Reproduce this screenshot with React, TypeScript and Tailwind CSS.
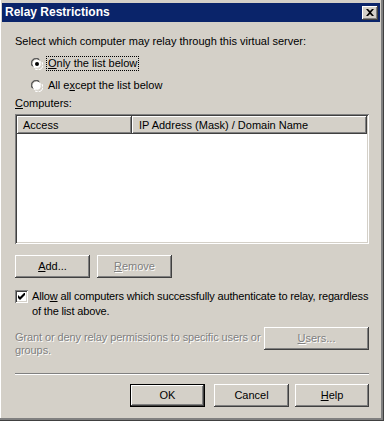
import React from 'react';

const raised = 'shadow-[inset_-1px_-1px_#404040,inset_1px_1px_#ffffff,inset_-2px_-2px_#808080,inset_2px_2px_#d4d0c8]';
const sunken = 'shadow-[inset_1px_1px_#808080,inset_-1px_-1px_#ffffff,inset_2px_2px_#404040,inset_-2px_-2px_#d4d0c8]';

const Btn: React.FC<{ children: React.ReactNode; w: string; disabled?: boolean; isDefault?: boolean }> = ({ children, w, disabled, isDefault }) => (
    <div className={`${w} h-[23px] shrink-0 ${isDefault ? 'border border-black' : ''}`}>
        <div className={`w-full h-full bg-[#d4d0c8] ${raised} flex items-center justify-center ${disabled ? 'text-[#808080] [text-shadow:1px_1px_#ffffff]' : 'text-black'}`}>
            {children}
        </div>
    </div>
);

const Radio: React.FC<{ checked?: boolean }> = ({ checked }) => (
    <svg width="12" height="12" viewBox="0 0 12 12" className="shrink-0">
        <path d="M1 8 A5 5 0 0 1 8 1" stroke="#808080" strokeWidth="1" fill="none" />
        <circle cx="6" cy="6" r="4.5" fill="#ffffff" />
        <path d="M2 8.5 A4.2 4.2 0 0 1 8.5 2" stroke="#404040" strokeWidth="1" fill="none" />
        <path d="M11 4 A5 5 0 0 1 4 11" stroke="#ffffff" strokeWidth="1" fill="none" />
        <path d="M10 4.5 A4.2 4.2 0 0 1 4.5 10" stroke="#d4d0c8" strokeWidth="1" fill="none" />
        {checked && <circle cx="6" cy="6" r="2" fill="#000000" />}
    </svg>
);

const App: React.FC = () => {
    return (
        <div className="relative w-[384px] h-[421px] bg-[#d4d0c8] overflow-hidden text-[11px] leading-[13px] text-black font-['Liberation_Sans',Arial,sans-serif] shadow-[inset_-1px_-1px_#404040,inset_-3px_-3px_#808080,inset_1px_0_#ffffff] flex flex-col">
            <div className="mt-[3px] ml-[2px] mr-[4px] h-[19px] bg-[#0a246a] flex items-center justify-between pl-[3px] pr-[2px] shrink-0">
                <span className="text-white font-bold text-[12px]">Relay Restrictions</span>
                <div className={`w-[16px] h-[14px] bg-[#d4d0c8] ${raised} flex items-center justify-center`}>
                    <svg width="8" height="7" viewBox="0 0 8 7">
                        <path d="M0 0h2l2 2 2-2h2L5 3.5 8 7H6L4 5 2 7H0l3-3.5z" fill="#000" />
                    </svg>
                </div>
            </div>

            <div className="pl-[15px] pr-[15px] flex flex-col">
                <div className="mt-[13px]">Select which computer may relay through this virtual server:</div>

                <div className="mt-[7px] ml-[16px] flex items-center gap-[3px] h-[17px]">
                    <Radio checked />
                    <span className="border border-dotted border-black px-[1px] leading-[13px]"><u>O</u>nly the list below</span>
                </div>
                <div className="mt-[5px] ml-[16px] flex items-center gap-[5px] h-[17px]">
                    <Radio />
                    <span>All e<u>x</u>cept the list below</span>
                </div>

                <div className="mt-[3px]"><u>C</u>omputers:</div>

                <div className={`mt-[4px] h-[130px] bg-white ${sunken} p-[2px]`}>
                    <div className="flex h-[18px]">
                        <div className={`w-[115px] bg-[#d4d0c8] ${raised} flex items-center pl-[6px]`}>Access</div>
                        <div className={`flex-1 bg-[#d4d0c8] ${raised} flex items-center pl-[7px]`}>IP Address (Mask) / Domain Name</div>
                    </div>
                </div>

                <div className="mt-[11px] flex gap-[7px]">
                    <Btn w="w-[75px]"><span><u>A</u>dd...</span></Btn>
                    <Btn w="w-[75px]" disabled><span><u>R</u>emove</span></Btn>
                </div>

                <div className="mt-[11px] flex items-start gap-[4px]">
                    <div className={`w-[13px] h-[13px] bg-white ${sunken} flex items-center justify-center shrink-0 mt-[1px]`}>
                        <svg width="7" height="7" viewBox="0 0 7 7">
                            <path d="M0 2v3l2 2 5-5V-1L2 4z" fill="#000" />
                        </svg>
                    </div>
                    <div className="leading-[15px] tracking-[-0.15px]">Allo<u>w</u> all computers which successfully authenticate to relay, regardless of the list above.</div>
                </div>

                <div className="mt-[8px] flex items-start justify-between">
                    <div className="text-[#808080] w-[248px] leading-[13px] mt-[4px] tracking-[-0.1px] [text-shadow:1px_1px_#ffffff]">Grant or deny relay permissions to specific users or groups.</div>
                    <Btn w="w-[105px]" disabled><span><u>U</u>sers...</span></Btn>
                </div>

                <div className="mt-[16px] h-[2px] border-t border-t-[#808080] border-b border-b-white" />

                <div className="mt-[9px] flex justify-end">
                    <Btn w="w-[75px]" isDefault>OK</Btn>
                    <div className="ml-[9px]"><Btn w="w-[75px]">Cancel</Btn></div>
                    <div className="ml-[6px]"><Btn w="w-[74px]"><span><u>H</u>elp</span></Btn></div>
                </div>
            </div>
        </div>
    );
};

export default App;
